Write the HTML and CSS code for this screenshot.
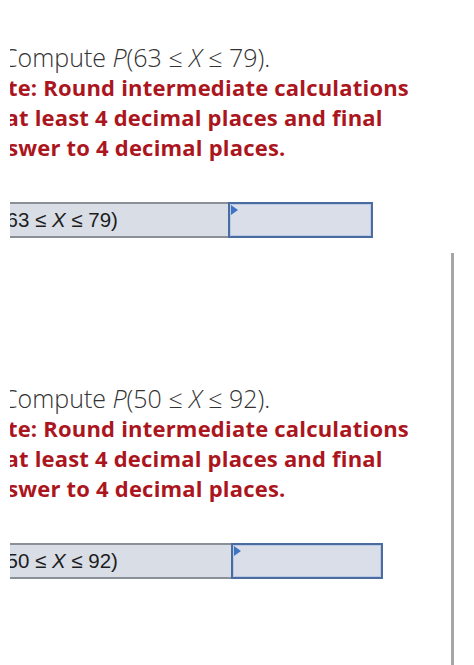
FILE: index.html
```html
<!DOCTYPE html>
<html>
<head>
<meta charset="utf-8">
<link rel="stylesheet" href="styles.css">
</head>
<body>
<div class="viewport">
  <section class="question">
    <div class="prompt">Compute <i>P</i>(63 ≤ <i>X</i> ≤ 79).</div>
    <div class="note">
      <div class="note-line l1">Note: Round intermediate calculations</div>
      <div class="note-line l2">to at least 4 decimal places and final</div>
      <div class="note-line l3">answer to 4 decimal places.</div>
    </div>
    <div class="answer-row">
      <div class="label w1"><span class="label-text">P(63 ≤ <i>X</i> ≤ 79)</span></div>
      <div class="input w1r"><span class="flag"></span></div>
    </div>
  </section>
  <section class="question">
    <div class="prompt">Compute <i>P</i>(50 ≤ <i>X</i> ≤ 92).</div>
    <div class="note">
      <div class="note-line l1">Note: Round intermediate calculations</div>
      <div class="note-line l2">to at least 4 decimal places and final</div>
      <div class="note-line l3">answer to 4 decimal places.</div>
    </div>
    <div class="answer-row">
      <div class="label w2"><span class="label-text">P(50 ≤ <i>X</i> ≤ 92)</span></div>
      <div class="input w2r"><span class="flag"></span></div>
    </div>
  </section>
</div>
<div class="scrollbar"></div>
</body>
</html>
```
FILE: styles.css
```css
html, body {
  margin: 0;
  padding: 0;
  background: #ffffff;
  width: 474px;
  height: 665px;
  overflow: hidden;
}
.viewport {
  margin-left: 10px;
  overflow: hidden;
  padding-top: 42px;
  width: 464px;
}
.question {
  height: 341px;
}
.question:last-child {
  height: auto;
}
.prompt {
  font-family: "Open Sans", "Liberation Sans", sans-serif;
  font-weight: 300;
  font-size: 25px;
  line-height: 30px;
  color: #333333;
  white-space: nowrap;
  text-indent: -8px;
}
.prompt i {
  font-style: italic;
}
.note {
  font-family: "Open Sans", "Liberation Sans", sans-serif;
  font-weight: 700;
  font-size: 22px;
  line-height: 30px;
  color: #ab161e;
  white-space: nowrap;
  letter-spacing: 0.2px;
}
.note-line.l1 { text-indent: -34px; }
.note-line.l2 { text-indent: -34px; }
.note-line.l3 { text-indent: -31px; }
.answer-row {
  display: flex;
  height: 36px;
  margin-top: 40px;
}
.label {
  box-sizing: border-box;
  background: #d9dde6;
  border-top: 2px solid #8a8f98;
  border-bottom: 2px solid #8a8f98;
  display: flex;
  align-items: center;
  overflow: hidden;
  white-space: nowrap;
}
.label.w1 { width: 218px; }
.label.w2 { width: 221px; }
.label-text {
  font-family: "Liberation Sans", Arial, sans-serif;
  font-size: 20.5px;
  color: #1e1e1e;
  margin-left: -24px;
}
.input {
  box-sizing: border-box;
  position: relative;
  border: 2px solid #4a6c9e;
  box-shadow: inset 0 0 0 1px #b9c9e6;
  background: #d9dee8;
}
.input.w1r { width: 145px; }
.input.w2r { width: 152px; }
.flag {
  position: absolute;
  left: 1px;
  top: 1px;
  width: 0;
  height: 0;
  border-top: 5px solid transparent;
  border-bottom: 5px solid transparent;
  border-left: 7px solid #3f74c4;
}
.scrollbar {
  position: absolute;
  left: 451px;
  top: 253px;
  width: 3px;
  height: 412px;
  background: #a6a6a6;
}
```
